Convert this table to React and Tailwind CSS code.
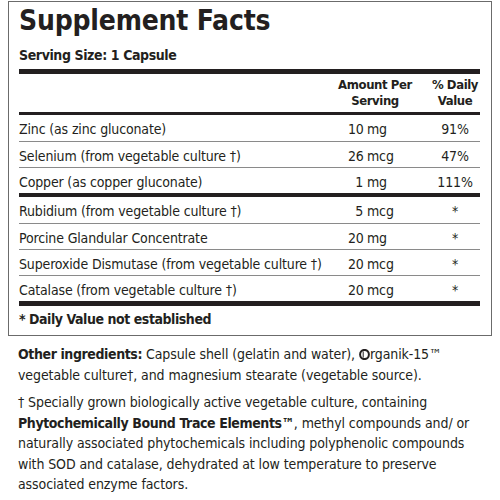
import React from "react";

const groupA = [
    { name: "Zinc (as zinc gluconate)", num: "10", unit: "mg", dv: "91%" },
    { name: "Selenium (from vegetable culture †)", num: "26", unit: "mcg", dv: "47%" },
    { name: "Copper (as copper gluconate)", num: "1", unit: "mg", dv: "111%" },
];

const groupB = [
    { name: "Rubidium (from vegetable culture †)", num: "5", unit: "mcg", dv: "*" },
    { name: "Porcine Glandular Concentrate", num: "20", unit: "mg", dv: "*" },
    { name: "Superoxide Dismutase (from vegetable culture †)", num: "20", unit: "mcg", dv: "*" },
    { name: "Catalase (from vegetable culture †)", num: "20", unit: "mcg", dv: "*" },
];

function Row({ item, first }) {
    return (
        <div className={`flex items-center h-[26px] pt-[3px] whitespace-nowrap ${first ? "" : "border-t border-[#8a8a8a]"}`}>
            <div className="flex-1">{item.name}</div>
            <div className="w-[74px] pl-[10px]">
                <span className="inline-block w-[15px] text-right">{item.num}</span>
                <span className="ml-[4px]">{item.unit}</span>
            </div>
            <div className="w-[68px] pl-[18px] text-center">{item.dv}</div>
        </div>
    );
}

// the brand "O" mark in Organik-15
function OMark() {
    return (
        <svg width="11" height="11" viewBox="0 0 11 11" className="inline-block align-[-1px]">
            <ellipse cx="5.5" cy="5.5" rx="4.4" ry="4.6" fill="none" stroke="#231f20" strokeWidth="2" />
            <line x1="4.2" y1="2.5" x2="4.2" y2="8.5" stroke="#231f20" strokeWidth="1" />
        </svg>
    );
}

export default function App() {
    return (
        <div
            className="w-[500px] h-[500px] bg-white text-[#231f20] overflow-hidden pt-px"
            style={{ fontFamily: '"Liberation Sans Narrow", "Arial Narrow", "DejaVu Sans Condensed", sans-serif' }}
        >
            <div className="mx-[8px] border border-[#6b6b6b] pl-[10px] pr-[11px] pt-[3px] pb-[3px]">
                <h1 className="text-[28px] leading-[32px] font-bold tracking-[-0.2px]">Supplement Facts</h1>
                <div className="mt-[9px] text-[14px] leading-[18px] font-bold tracking-[-0.4px]">Serving Size: 1 Capsule</div>
                <div className="mt-[5px] h-[5px] bg-[#231f20]"></div>

                <div className="flex items-center h-[38px] text-[13px] leading-[16px] font-bold tracking-[-0.4px] whitespace-nowrap">
                    <div className="flex-1"></div>
                    <div className="w-[74px] text-center">Amount Per<br />Serving</div>
                    <div className="w-[68px] pl-[18px] text-center">% Daily<br />Value</div>
                </div>
                <div className="h-[3px] bg-[#231f20]"></div>

                <div className="text-[14px] tracking-[-0.15px]">
                    {groupA.map((item, i) => (
                        <Row key={item.name} item={item} first={i === 0} />
                    ))}
                </div>
                <div className="h-[4px] bg-[#231f20]"></div>
                <div className="text-[14px] tracking-[-0.15px]">
                    {groupB.map((item, i) => (
                        <Row key={item.name} item={item} first={i === 0} />
                    ))}
                </div>
                <div className="h-[5px] bg-[#231f20]"></div>
                <div className="text-[14px] leading-[26px] font-bold tracking-[-0.45px]">* Daily Value not established</div>
            </div>

            <div className="px-[18px] mt-[8px] text-[14px] leading-[20.5px] tracking-[-0.1px] whitespace-nowrap">
                <p>
                    <span className="font-bold tracking-[-0.4px]">Other ingredients:</span> Capsule shell (gelatin and water), <OMark />rganik-15™
                    <br />
                    vegetable culture†, and magnesium stearate (vegetable source).
                </p>
                <p className="mt-[7px]">
                    † Specially grown biologically active vegetable culture, containing
                    <br />
                    <span className="font-bold tracking-[-0.4px]">Phytochemically Bound Trace Elements™</span>, methyl compounds and/ or
                    <br />
                    naturally associated phytochemicals including polyphenolic compounds
                    <br />
                    with SOD and catalase, dehydrated at low temperature to preserve
                    <br />
                    associated enzyme factors.
                </p>
            </div>
        </div>
    );
}
